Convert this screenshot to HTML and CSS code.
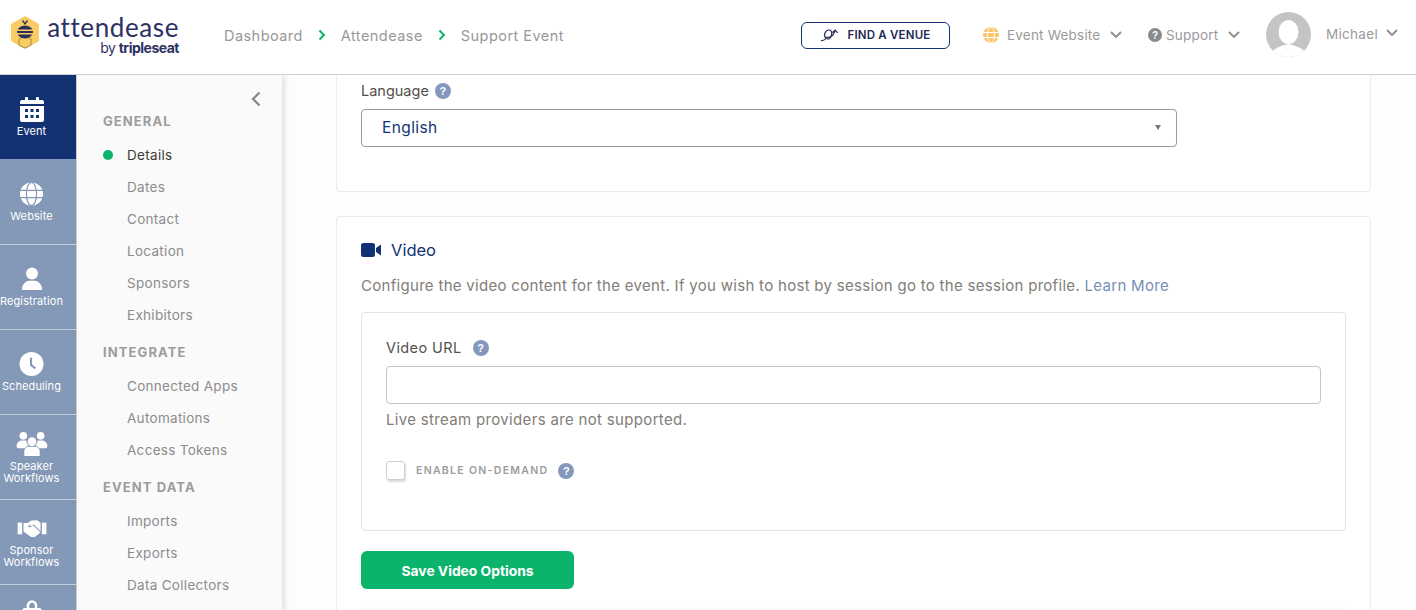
FILE: index.html
```html
<!DOCTYPE html>
<html lang="en">
  <head>
    <meta charset="UTF-8" />
    <title>Support Event - Attendease</title>
    <link rel="stylesheet" href="styles.css">
  </head>
  <body>
    <header class="topbar">
      <div class="logo">
        <svg class="logo-mark" width="30" height="33" viewBox="0 0 30 33">
          <polygon points="15,0 29,8 29,25 15,33 1,25 1,8" fill="#f8cd66"/>
          <polygon points="9,23 15,20 21,23 21,29 15,32 9,29" fill="none" stroke="#a98a3c" stroke-width="1"/>
          <ellipse cx="15" cy="16" rx="8" ry="6.500" fill="#2b2f55"/>
          <rect x="7" y="13.500" width="16" height="1.500" fill="#f8cd66"/>
          <rect x="7" y="17" width="16" height="1.500" fill="#f8cd66"/>
          <path d="M12.500 4.500 L15 8 L17.500 4.500" fill="none" stroke="#2b2f55" stroke-width="1.300"/>
        </svg>
        <div class="logo-text">
          <span class="logo-name">attendease</span>
          <span class="logo-by">by <b>tripleseat</b></span>
        </div>
      </div>

      <nav class="crumbs">
        <a>Dashboard</a>
        <svg class="crumb-sep" width="8" height="12" viewBox="0 0 8 12"><path d="M1.500 1.500 L6 6 L1.500 10.500" fill="none" stroke="#0bb36b" stroke-width="2"/></svg>
        <a>Attendease</a>
        <svg class="crumb-sep" width="8" height="12" viewBox="0 0 8 12"><path d="M1.500 1.500 L6 6 L1.500 10.500" fill="none" stroke="#0bb36b" stroke-width="2"/></svg>
        <a>Support Event</a>
      </nav>

      <button class="venue-btn">
        <svg width="20" height="14" viewBox="0 0 20 14"><path d="M1 12.500 C4 13 5 12 6 10 C3 8 5 2 9 2 C12.500 2 12.500 7 10 10 C8.500 12 6 11 7 9 C9 10 13 9 15 3 M12.500 4.500 L15.200 2 L17.500 4.800" fill="none" stroke="#2b2f55" stroke-width="1.200"/></svg>
        FIND A VENUE
      </button>

      <div class="top-item top-website">
        <svg width="16" height="16" viewBox="0 0 16 16">
          <circle cx="8" cy="8" r="8" fill="#fbc56d"/>
          <path d="M0 5.500 H16 M0 10.500 H16" stroke="#fff" stroke-width="1"/>
          <ellipse cx="8" cy="8" rx="3.500" ry="8" fill="none" stroke="#fff" stroke-width="1"/>
        </svg>
        <span>Event Website</span>
        <svg class="chev" width="12" height="8" viewBox="0 0 12 8"><path d="M1 1 L6 6 L11 1" fill="none" stroke="#8d8d8d" stroke-width="1.800"/></svg>
      </div>

      <div class="top-item top-support">
        <span class="round-q grey">?</span>
        <span>Support</span>
        <svg class="chev" width="12" height="8" viewBox="0 0 12 8"><path d="M1 1 L6 6 L11 1" fill="none" stroke="#8d8d8d" stroke-width="1.800"/></svg>
      </div>

      <div class="top-user">
        <svg class="avatar" width="45" height="45" viewBox="0 0 45 45">
          <defs><clipPath id="av"><circle cx="22.500" cy="22.500" r="22.500"/></clipPath></defs>
          <g clip-path="url(#av)">
            <rect width="45" height="45" fill="#c4c4c4"/>
            <ellipse cx="22.500" cy="20" rx="10" ry="12" fill="#fff"/>
            <path d="M3 45 C5 37 14 34 22.500 32 C31 34 40 37 42 45 Z" fill="#fff"/>
          </g>
        </svg>
        <span class="user-name">Michael</span>
        <svg class="chev" width="12" height="8" viewBox="0 0 12 8"><path d="M1 1 L6 6 L11 1" fill="none" stroke="#8d8d8d" stroke-width="1.800"/></svg>
      </div>
    </header>

    <div class="layout">
      <aside class="rail">
        <a class="rail-item active">
          <svg width="24" height="26" viewBox="0 0 24 26">
            <path d="M2 4 H22 a2 2 0 0 1 2 2 V8 H0 V6 a2 2 0 0 1 2-2 Z M0 10 H24 V24 a2 2 0 0 1-2 2 H2 a2 2 0 0 1-2-2 Z" fill="#fff"/>
            <rect x="5" y="1" width="3" height="5" rx="1" fill="#fff"/><rect x="16" y="1" width="3" height="5" rx="1" fill="#fff"/>
            <g fill="#123274"><rect x="5" y="13" width="3" height="3"/><rect x="10.500" y="13" width="3" height="3"/><rect x="16" y="13" width="3" height="3"/><rect x="5" y="19" width="3" height="3"/><rect x="10.500" y="19" width="3" height="3"/><rect x="16" y="19" width="3" height="3"/></g>
          </svg>
          <span>Event</span>
        </a>
        <a class="rail-item website">
          <svg width="25" height="24" viewBox="0 0 26 26">
            <circle cx="13" cy="13" r="12.500" fill="#fff"/>
            <g fill="none" stroke="#8498b7" stroke-width="1.300"><path d="M0 9 H26 M0 17 H26"/><ellipse cx="13" cy="13" rx="5.500" ry="12.500"/></g>
          </svg>
          <span>Website</span>
        </a>
        <a class="rail-item">
          <svg width="22" height="24" viewBox="0 0 24 26">
            <circle cx="12" cy="7" r="6.500" fill="#fff"/>
            <path d="M1 25 C1 18 6 15 9 15 H15 C18 15 23 18 23 25 Z" fill="#fff"/>
          </svg>
          <span>Registration</span>
        </a>
        <a class="rail-item">
          <svg width="25" height="24" viewBox="0 0 25 25">
            <circle cx="12.500" cy="12.500" r="12.500" fill="#fff"/>
            <path d="M12 6 V13.500 L16.500 17" fill="none" stroke="#8498b7" stroke-width="2.200"/>
          </svg>
          <span>Scheduling</span>
        </a>
        <a class="rail-item speaker">
          <svg width="32" height="25" viewBox="0 0 32 26">
            <g fill="#fff">
              <circle cx="7" cy="5" r="4"/><circle cx="25" cy="5" r="4"/><circle cx="16" cy="11" r="4.500"/>
              <path d="M0 16 C0 12 3 10 6 10 H10 C10.500 12 11 14 12.500 15 C10 16 9 17 8.500 18 H1 Z"/>
              <path d="M32 16 C32 12 29 10 26 10 H22 C21.500 12 21 14 19.500 15 C22 16 23 17 23.500 18 H31 Z"/>
              <path d="M8 26 V21 C8 18 11 16.500 13 16.500 H19 C21 16.500 24 18 24 21 V26 Z"/>
            </g>
          </svg>
          <span>Speaker Workflows</span>
        </a>
        <a class="rail-item sponsor">
          <svg width="32" height="18" viewBox="0 0 32 20">
            <g fill="#fff">
              <rect x="0" y="4" width="5" height="13"/><rect x="27" y="4" width="5" height="13"/>
              <path d="M6.500 4.500 H11 L16 1.500 H18 L11.500 8 C13 10 15 9 17 7 L25.500 15 L19 20 H15 L6.500 14 Z"/>
              <path d="M14 4 L19 1.500 H22 L25.500 4.500 V13.500 L18 6 C16 7 14 8.500 13 7 Z"/>
            </g>
          </svg>
          <span>Sponsor Workflows</span>
        </a>
        <a class="rail-item lock">
          <svg width="24" height="26" viewBox="0 0 24 26">
            <path d="M8 9 V5.500 a4 4 0 0 1 8 0 V9" fill="none" stroke="#fff" stroke-width="2.500"/>
            <rect x="2" y="8" width="20" height="17" rx="3" fill="#fff"/>
          </svg>
        </a>
      </aside>

      <aside class="sidenav">
        <svg class="collapse" width="10" height="16" viewBox="0 0 10 16"><path d="M8.500 1.500 L2 8 L8.500 14.500" fill="none" stroke="#858585" stroke-width="2.200"/></svg>
        <h4 class="nav-head first">GENERAL</h4>
        <a class="nav-link current">Details</a>
        <a class="nav-link">Dates</a>
        <a class="nav-link">Contact</a>
        <a class="nav-link">Location</a>
        <a class="nav-link">Sponsors</a>
        <a class="nav-link">Exhibitors</a>
        <h4 class="nav-head">INTEGRATE</h4>
        <a class="nav-link">Connected Apps</a>
        <a class="nav-link">Automations</a>
        <a class="nav-link">Access Tokens</a>
        <h4 class="nav-head">EVENT DATA</h4>
        <a class="nav-link">Imports</a>
        <a class="nav-link">Exports</a>
        <a class="nav-link">Data Collectors</a>
      </aside>

      <main class="content">
        <section class="card card-lang">
          <label class="field-label">Language <span class="round-q blue">?</span></label>
          <div class="select">
            <span>English</span>
            <i class="caret"></i>
          </div>
        </section>

        <section class="card card-video">
          <h3 class="card-title">
            <svg width="20" height="14" viewBox="0 0 20 14"><rect x="0" y="0" width="14" height="14" rx="2.500" fill="#123274"/><path d="M15 5 L20 1.500 V12.500 L15 9 Z" fill="#123274"/></svg>
            Video
          </h3>
          <p class="card-desc">Configure the video content for the event. If you wish to host by session go to the session profile. <a class="learn">Learn More</a></p>
          <div class="inner-box">
            <label class="field-label url-label">Video URL <span class="round-q blue">?</span></label>
            <input class="text-input" type="text" />
            <p class="hint">Live stream providers are not supported.</p>
            <div class="check-row">
              <span class="checkbox"></span>
              <span class="check-label">ENABLE ON-DEMAND</span>
              <span class="round-q blue">?</span>
            </div>
          </div>
          <button class="save-btn">Save Video Options</button>
          <div class="next-box"></div>
        </section>
      </main>
    </div>
  </body>
</html>
```

FILE: styles.css
```css
* {
  box-sizing: border-box;
}
html,
body {
  margin: 0;
  padding: 0;
  height: 610px;
  overflow: hidden;
}
body {
  font-family: "Inter", "Noto Sans", sans-serif;
  color: #7c7c7c;
  background: #fff;
}

/* top bar */
.topbar {
  display: flex;
  align-items: center;
  height: 75px;
  padding-bottom: 4px;
  border-bottom: 1px solid #cfcfcf;
  background: #fff;
}
.logo {
  display: flex;
  align-items: center;
  width: 224px;
  padding-left: 10px;
}
.logo-mark {
  margin: 0 7px 6px 0;
}
.logo-text {
  display: flex;
  flex-direction: column;
  align-items: flex-end;
  width: 132px;
  color: #2b3162;
  margin-bottom: 3px;
}
.logo-name {
  font-family: "Lato", sans-serif;
  font-size: 26px;
  line-height: 27px;
  letter-spacing: 0.6px;
}
.logo-by {
  font-size: 14px;
  line-height: 13px;
  letter-spacing: -0.5px;
}
.crumbs {
  display: flex;
  align-items: center;
  gap: 15px;
  width: 577px;
  font-size: 14.500px;
  letter-spacing: 0.45px;
  color: #989898;
}
.venue-btn {
  display: flex;
  align-items: center;
  justify-content: center;
  gap: 7px;
  width: 149px;
  height: 27px;
  border: 1px solid #123274;
  border-radius: 6px;
  background: #fff;
  color: #1d2a55;
  font-family: "Inter", sans-serif;
  font-size: 11.500px;
  font-weight: 600;
  letter-spacing: 0.2px;
  padding: 0;
}
.top-item {
  display: flex;
  align-items: center;
  font-size: 13.500px;
  letter-spacing: 0.2px;
  color: #9a9a9a;
}
.top-website {
  margin-left: 33px;
  gap: 8px;
  width: 165px;
}
.top-website .chev {
  margin-left: 2px;
}
.top-support {
  gap: 4px;
  width: 118px;
}
.chev {
  margin-left: 6px;
}
.top-user {
  display: flex;
  align-items: center;
}
.avatar {
  flex: none;
  margin-bottom: 1px;
}
.user-name {
  margin: 0 8px 3px 15px;
  font-size: 13.500px;
  letter-spacing: 0.3px;
  color: #9a9a9a;
}
.top-user .chev {
  margin: 0 0 5px 0;
}

/* question mark badge */
.round-q {
  display: inline-flex;
  align-items: center;
  justify-content: center;
  width: 16px;
  height: 16px;
  border-radius: 50%;
  color: #fff;
  font-family: "Liberation Sans", sans-serif;
  font-size: 11px;
  font-weight: 700;
  letter-spacing: 0;
}
.round-q.grey {
  width: 14px;
  height: 14px;
  font-size: 10px;
  background: #8a8a8a;
}
.round-q.blue {
  background: #8498bd;
}

/* page layout */
.layout {
  display: flex;
  height: 535px;
  overflow: hidden;
}
.rail {
  flex: none;
  width: 77px;
  border-right: 1px solid #d2d2d2;
  background: #fafafa;
}
.rail-item {
  display: flex;
  flex-direction: column;
  align-items: center;
  height: 85px;
  padding: 22px 13px 0 0;
  border-bottom: 1px solid #c3cede;
  background: #8498b7;
  color: #fff;
  font-size: 11px;
  line-height: 12px;
  letter-spacing: 0.1px;
  text-align: center;
}
.rail-item span {
  margin-top: 4px;
}
.rail-item.active {
  height: 84px;
  padding-top: 21px;
  border-bottom: 0;
  background: #123274;
}
.rail-item.active span {
  margin-top: 3px;
}
.rail-item.website {
  height: 86px;
  padding-top: 23px;
}
.rail-item.speaker {
  padding-top: 16px;
}
.rail-item.sponsor {
  padding-top: 19px;
}
.rail-item.sponsor span {
  margin-top: 7px;
}
.rail-item.lock {
  padding-top: 15px;
}
.sidenav {
  position: relative;
  flex: none;
  width: 205px;
  padding: 0 0 0 26px;
  background: #fafafa;
  box-shadow: 2px 0 6px rgba(0, 0, 0, 0.14);
}
.collapse {
  position: absolute;
  top: 16px;
  left: 174px;
}
.nav-head {
  margin: 11px 0 8px;
  height: 20px;
  font-size: 13px;
  line-height: 20px;
  font-weight: 700;
  letter-spacing: 1.1px;
  color: #9c9c9c;
}
.nav-head.first {
  margin-top: 36px;
}
.nav-link {
  position: relative;
  display: block;
  height: 32px;
  padding-left: 24px;
  font-size: 13.500px;
  line-height: 32px;
  letter-spacing: 0.3px;
  color: #8c8c8c;
}
.nav-link.current {
  color: #3e3a35;
}
.nav-link.current::before {
  content: "";
  position: absolute;
  left: 0;
  top: 11px;
  width: 10px;
  height: 10px;
  border-radius: 50%;
  background: #0bb36b;
}

/* main column */
.content {
  flex: 1;
  padding: 0 45px 0 54px;
  background: #fdfdfd;
}
.card {
  background: #fff;
  border: 1px solid #ececec;
  border-radius: 4px;
  padding: 0 24px;
}
.card-lang {
  height: 117px;
  border-top: 0;
  border-radius: 0 0 4px 4px;
  margin-bottom: 24px;
  padding-top: 6px;
}
.field-label {
  display: flex;
  align-items: center;
  gap: 6px;
  font-size: 14.500px;
  line-height: 20px;
  color: #54504b;
}
.select {
  position: relative;
  display: flex;
  align-items: center;
  height: 38px;
  margin-top: 8px;
  width: 816px;
  padding: 0 0 1px 20px;
  border: 1px solid #9b9b9b;
  border-radius: 4px;
  font-size: 15.500px;
  letter-spacing: 0.4px;
  color: #123274;
}
.caret {
  position: absolute;
  right: 15px;
  top: 15px;
  border-left: 3.500px solid transparent;
  border-right: 3.500px solid transparent;
  border-top: 5px solid #777;
}
.card-video {
  height: 500px;
  padding-top: 21px;
}
.card-title {
  display: flex;
  align-items: center;
  gap: 10px;
  margin: 0;
  font-size: 16.500px;
  line-height: 24px;
  font-weight: 400;
  color: #123274;
}
.card-desc {
  margin: 13px 0 0;
  font-size: 15px;
  line-height: 22px;
  letter-spacing: 0.3px;
  color: #827d78;
}
.learn {
  color: #7690b5;
}
.inner-box {
  height: 219px;
  margin-top: 15px;
  padding: 25px 24px 0;
  border: 1px solid #e2e2e2;
  border-radius: 4px;
}
.url-label {
  gap: 11px;
  letter-spacing: 0.4px;
}
.text-input {
  display: block;
  width: 100%;
  height: 38px;
  margin-top: 8px;
  border: 1px solid #c4c4c4;
  border-radius: 4px;
  background: #fff;
}
.hint {
  margin: 6px 0 0;
  font-size: 15px;
  line-height: 20px;
  letter-spacing: 0.33px;
  color: #827d78;
}
.check-row {
  display: flex;
  align-items: center;
  margin-top: 31px;
}
.checkbox {
  width: 19px;
  height: 19px;
  border: 1px solid #cfcfcf;
  border-radius: 3px;
  background: #fff;
  box-shadow: 1px 2px 2px rgba(0, 0, 0, 0.14);
}
.check-label {
  margin: 0 10px 0 11px;
  font-size: 10.500px;
  font-weight: 600;
  letter-spacing: 1.3px;
  color: #9c9c9c;
}
.save-btn {
  display: block;
  width: 213px;
  height: 38px;
  margin-top: 20px;
  padding: 1px 0 0;
  border: 0;
  border-radius: 6px;
  background: #0bb36b;
  color: #fff;
  font-family: "Inter", sans-serif;
  font-size: 13.800px;
  font-weight: 700;
}
.next-box {
  height: 40px;
  margin-top: 18px;
  background: #fbfbfb;
}
```
